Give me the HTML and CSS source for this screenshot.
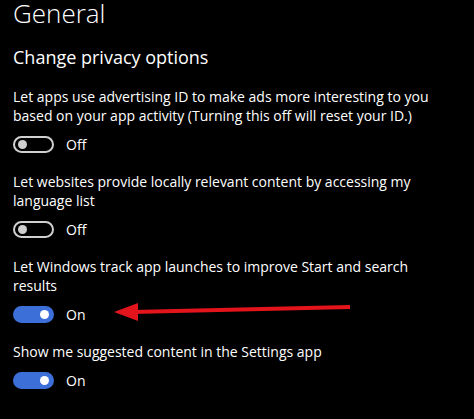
FILE: index.html
```html
<!DOCTYPE html>
<html lang="en">
<head>
  <meta charset="UTF-8" />
  <title>Settings - General</title>
  <link rel="stylesheet" href="styles.css">
</head>
<body>

  <div class="settings">
    <h1 class="page-title">General</h1>
    <h2 class="section-title">Change privacy options</h2>

    <div class="option">
      <p class="option-text">Let apps use advertising ID to make ads more interesting to you based on your app activity (Turning this off will reset your ID.)</p>
      <div class="toggle-row">
        <span class="toggle"><span class="knob"></span></span>
        <span class="toggle-label">Off</span>
      </div>
    </div>

    <div class="option">
      <p class="option-text">Let websites provide locally relevant content by accessing my language list</p>
      <div class="toggle-row">
        <span class="toggle"><span class="knob"></span></span>
        <span class="toggle-label">Off</span>
      </div>
    </div>

    <div class="option">
      <p class="option-text">Let Windows track app launches to improve Start and search results</p>
      <div class="toggle-row">
        <span class="toggle on"><span class="knob"></span></span>
        <span class="toggle-label">On</span>
      </div>
    </div>

    <div class="option">
      <p class="option-text">Show me suggested content in the Settings app</p>
      <div class="toggle-row">
        <span class="toggle on"><span class="knob"></span></span>
        <span class="toggle-label">On</span>
      </div>
    </div>
  </div>

  <!-- red arrow pointing at the third toggle -->
  <svg class="arrow" width="474" height="419" viewBox="0 0 474 419">
    <line x1="350" y1="307" x2="132" y2="312" stroke="#e3141b" stroke-width="4" />
    <polygon points="114,312 138,303 138,321" fill="#e3141b" />
  </svg>

</body>
</html>
```

FILE: styles.css
```css
body {
  margin: 0;
  background: #000;
  color: #fff;
  font-family: "Open Sans", "Noto Sans", sans-serif;
  min-height: 100vh;
  position: relative;
  overflow: hidden;
}

.settings {
  padding: 0 13px;
}

.page-title {
  font-size: 26px;
  font-weight: 300;
  line-height: 26px;
  margin: 0;
}

.section-title {
  font-size: 18px;
  font-weight: 400;
  line-height: 24px;
  margin: 19px 0 0 0;
}

.option {
  margin-top: 18px;
}

.option-text {
  font-size: 14px;
  line-height: 19px;
  max-width: 425px;
  margin: 0;
}

.toggle-row {
  display: flex;
  align-items: center;
  gap: 12px;
  margin-top: 10px;
}

.toggle {
  box-sizing: border-box;
  width: 41px;
  height: 17px;
  border: 2px solid #d0d0d0;
  border-radius: 9px;
  display: flex;
  align-items: center;
  padding: 0 3px;
}

.knob {
  width: 9px;
  height: 9px;
  border-radius: 50%;
  background: #cfcfcf;
}

.toggle.on {
  background: #3d6fd9;
  border-color: #3d6fd9;
  justify-content: flex-end;
}

.toggle.on .knob {
  background: #fff;
}

.toggle-label {
  font-size: 14px;
}

.arrow {
  position: absolute;
  left: 0;
  top: 0;
  pointer-events: none;
}
```
